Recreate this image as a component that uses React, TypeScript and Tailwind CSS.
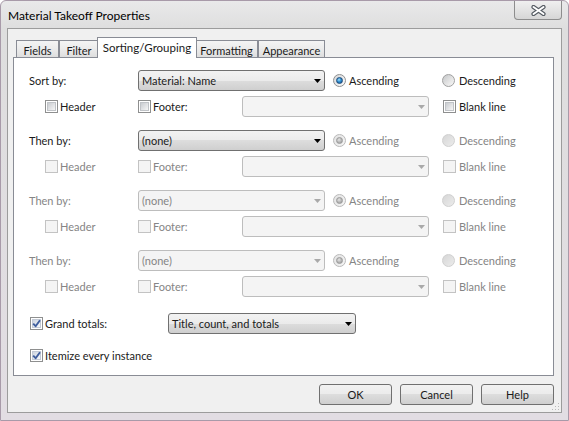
import React from "react";

const btnBg =
  "bg-[linear-gradient(to_bottom,#f2f2f2_0%,#ebebeb_50%,#dddddd_50%,#cfcfcf_100%)]";
const enabledText = "text-[#1a1a1a]";
const disabledText = "text-[#858585]";

function CheckBox({ checked = false, disabled = false }: { checked?: boolean; disabled?: boolean }) {
  if (disabled) {
    return <div className="w-[13px] h-[13px] shrink-0 border border-[#c3c3c3] bg-[#f4f4f4]" />;
  }
  return (
    <div className="relative w-[13px] h-[13px] shrink-0 border border-[#8e8f8f] bg-white p-px">
      <div
        className={
          checked
            ? "w-full h-full border border-[#c3cad6] bg-[linear-gradient(135deg,#cdd4df_0%,#e6eaf0_60%,#f7f8fa_100%)]"
            : "w-full h-full border border-[#c0c3c7] bg-[linear-gradient(135deg,#c9ccd0_0%,#e4e5e7_60%,#f6f6f6_100%)]"
        }
      />
      {checked && (
        <svg className="absolute left-[1px] top-[1px]" width="9" height="9" viewBox="0 0 9 9">
          <path d="M1.2 4.6 L3.6 7.2 L8 1.2" fill="none" stroke="#3f5e9e" strokeWidth="1.9" strokeLinejoin="round" />
        </svg>
      )}
    </div>
  );
}

function Radio({ selected = false, disabled = false }: { selected?: boolean; disabled?: boolean }) {
  if (disabled) {
    return (
      <div
        className={
          selected
            ? "w-[13px] h-[13px] shrink-0 rounded-full border border-[#b9b9b9] bg-[linear-gradient(135deg,#e2e2e2_0%,#f6f6f6_100%)] flex items-center justify-center"
            : "w-[13px] h-[13px] shrink-0 rounded-full border border-[#d0d0d0] bg-[linear-gradient(135deg,#d6d6d6_0%,#ececec_100%)]"
        }
      >
        {selected && (
          <div className="w-[7px] h-[7px] rounded-full border border-[#9a9a9a] bg-[radial-gradient(circle_at_40%_35%,#e4e4e4_0%,#b4b4b4_55%,#969696_100%)]" />
        )}
      </div>
    );
  }
  return (
    <div
      className={
        selected
          ? "w-[13px] h-[13px] shrink-0 rounded-full border border-[#8e8f8f] bg-[linear-gradient(135deg,#d2d4d6_0%,#eeeeee_60%,#fbfbfb_100%)] flex items-center justify-center"
          : "w-[13px] h-[13px] shrink-0 rounded-full border border-[#a0a0a0] bg-[linear-gradient(135deg,#c4c6c8_0%,#e6e6e6_60%,#f8f8f8_100%)]"
      }
    >
      {selected && (
        <div className="w-[7px] h-[7px] rounded-full border border-[#1d4a7a] bg-[radial-gradient(circle_at_40%_35%,#a6e0fb_0%,#2f8fd0_45%,#0d4a8c_100%)]" />
      )}
    </div>
  );
}

function Arrow({ color }: { color: string }) {
  return (
    <svg width="7" height="4" viewBox="0 0 7 4" className="shrink-0">
      <polygon points="0,0 7,0 3.5,4" fill={color} />
    </svg>
  );
}

function Combo({
  text = "",
  disabled = false,
  width,
}: {
  text?: string;
  disabled?: boolean;
  width: string;
}) {
  return (
    <div
      className={
        (disabled
          ? "border-[#bdbdbd] bg-[#f4f4f4] " + disabledText
          : "border-[#707070] " + btnBg + " " + enabledText) +
        " " +
        width +
        " h-[21px] shrink-0 rounded-[3px] border flex items-center justify-between pl-[3px] pr-[3px]"
      }
    >
      <span className="leading-[13px] whitespace-nowrap">{text}</span>
      <Arrow color={disabled ? "#a9a9a9" : "#000000"} />
    </div>
  );
}

type Group = {
  label: string;
  labelDis: boolean;
  combo: string;
  comboDis: boolean;
  radioDis: boolean;
  rowBDis: boolean;
};

const groups: Group[] = [
  { label: "Sort by:", labelDis: false, combo: "Material: Name", comboDis: false, radioDis: false, rowBDis: false },
  { label: "Then by:", labelDis: false, combo: "(none)", comboDis: false, radioDis: true, rowBDis: true },
  { label: "Then by:", labelDis: true, combo: "(none)", comboDis: true, radioDis: true, rowBDis: true },
  { label: "Then by:", labelDis: true, combo: "(none)", comboDis: true, radioDis: true, rowBDis: true },
];

function SortGroup({ g }: { g: Group }) {
  return (
    <div className="flex flex-col gap-[5px]">
      <div className="flex items-center h-[21px]">
        <div className={"w-[109px] shrink-0 leading-[13px] " + (g.labelDis ? disabledText : enabledText)}>{g.label}</div>
        <Combo text={g.combo} disabled={g.comboDis} width="w-[187px]" />
        <div className="w-[8px] shrink-0" />
        <div className="w-[109px] shrink-0 flex items-center gap-[3px]">
          <Radio selected disabled={g.radioDis} />
          <span className={"leading-[13px] " + (g.radioDis ? disabledText : enabledText)}>Ascending</span>
        </div>
        <div className="flex items-center gap-[4px]">
          <Radio disabled={g.radioDis} />
          <span className={"leading-[13px] " + (g.radioDis ? disabledText : enabledText)}>Descending</span>
        </div>
      </div>
      <div className="flex items-center h-[21px] pl-[16px]">
        <div className="w-[93px] shrink-0 flex items-center gap-[2px]">
          <CheckBox disabled={g.rowBDis} />
          <span className={"leading-[13px] " + (g.rowBDis ? disabledText : enabledText)}>Header</span>
        </div>
        <div className="w-[104px] shrink-0 flex items-center gap-[2px]">
          <CheckBox disabled={g.rowBDis} />
          <span className={"leading-[13px] " + (g.rowBDis ? disabledText : enabledText)}>Footer:</span>
        </div>
        <Combo disabled width="w-[187px]" />
        <div className="w-[14px] shrink-0" />
        <div className="flex items-center gap-[3px]">
          <CheckBox disabled={g.rowBDis} />
          <span className={"leading-[13px] " + (g.rowBDis ? disabledText : enabledText)}>Blank line</span>
        </div>
      </div>
    </div>
  );
}

function Tab({ label, w, selected = false }: { label: string; w: string; selected?: boolean }) {
  if (selected) {
    return (
      <div
        className={
          w +
          " relative z-10 -mx-[2px] -mb-px h-[21px] shrink-0 border border-b-0 border-[#898c95] bg-white flex items-start justify-center pt-[3px] text-[11.5px] leading-[14px] " +
          enabledText
        }
      >
        {label}
      </div>
    );
  }
  return (
    <div
      className={
        w +
        " h-[17px] shrink-0 border border-b-0 border-[#898c95] bg-[linear-gradient(to_bottom,#f4f4f4_0%,#ebebeb_50%,#dedede_100%)] flex items-center justify-center pt-[2px] leading-[13px] " +
        enabledText
      }
    >
      {label}
    </div>
  );
}

function Button({ label }: { label: string }) {
  return (
    <div
      className={
        "w-[73px] h-[21px] rounded-[3px] border border-[#707070] flex items-center justify-center leading-[13px] " +
        btnBg +
        " " +
        enabledText
      }
    >
      {label}
    </div>
  );
}

export default function App() {
  return (
    <div className="w-[569px] h-[421px] overflow-hidden bg-white font-[Lato,sans-serif] text-[11px]">
      <div className="w-[569px] h-[421px] flex flex-col rounded-t-[6px] border border-[#a89aa9] bg-[linear-gradient(to_bottom,#e9e9ea_0px,#dedede_28px,#e2dde3_100%)]">
        {/* title bar */}
        <div className="h-[27px] shrink-0 flex items-start justify-between">
          <div className="pl-[7px] pt-[7px] text-[12px] leading-[15px] text-black">Material Takeoff Properties</div>
          <div className="mr-[6px] w-[48px] h-[19px] rounded-b-[4px] border border-t-0 border-[#8d8d8d] bg-[linear-gradient(to_bottom,#f0f0f0_0%,#e3e3e3_50%,#d6d6d6_100%)] flex items-center justify-center">
            <svg width="15" height="11" viewBox="0 0 15 11">
              <path d="M2.5 2 L12.5 9 M12.5 2 L2.5 9" stroke="#555b62" strokeWidth="4.2" strokeLinecap="round" />
              <path d="M2.5 2 L12.5 9 M12.5 2 L2.5 9" stroke="#ffffff" strokeWidth="2" strokeLinecap="round" />
            </svg>
          </div>
        </div>
        {/* client area */}
        <div className="relative mx-[6px] h-[385px] shrink-0 border border-[#9c9c9c] bg-[#f0f0f0] pl-[5px] pt-[8px]">
          {/* tab strip */}
          <div className="flex items-end h-[20px] pl-[3px]">
            <Tab label="Fields" w="w-[43px]" />
            <Tab label="Filter" w="w-[40px]" />
            <Tab label="Sorting/Grouping" w="w-[100px]" selected />
            <Tab label="Formatting" w="w-[63px]" />
            <Tab label="Appearance" w="w-[67px]" />
          </div>
          {/* panel */}
          <div className="w-[541px] h-[319px] border border-[#898c95] bg-white pl-[15px] pt-[12px] flex flex-col">
            <div className="flex flex-col gap-[13px]">
              {groups.map((g, i) => (
                <SortGroup key={i} g={g} />
              ))}
            </div>
            <div className="mt-[16px] ml-px flex items-center h-[21px]">
              <div className="w-[138px] shrink-0 flex items-center gap-[2px]">
                <CheckBox checked />
                <span className={"leading-[13px] " + enabledText}>Grand totals:</span>
              </div>
              <Combo text="Title, count, and totals" width="w-[188px]" />
            </div>
            <div className="mt-[11px] ml-px flex items-center h-[21px] gap-[2px]">
              <CheckBox checked />
              <span className={"leading-[13px] " + enabledText}>Itemize every instance</span>
            </div>
          </div>
          {/* buttons */}
          <div className="mt-[8px] pr-[7px] flex justify-end gap-[8px]">
            <Button label="OK" />
            <Button label="Cancel" />
            <Button label="Help" />
          </div>
          {/* size grip */}
          <svg className="absolute right-[1px] bottom-[1px]" width="8" height="8" viewBox="0 0 8 8">
            <rect x="6" y="0" width="1" height="1" fill="#b8b8b8" />
            <rect x="3" y="3" width="1" height="1" fill="#b8b8b8" />
            <rect x="6" y="3" width="1" height="1" fill="#b8b8b8" />
            <rect x="0" y="6" width="1" height="1" fill="#b8b8b8" />
            <rect x="3" y="6" width="1" height="1" fill="#b8b8b8" />
            <rect x="6" y="6" width="1" height="1" fill="#b8b8b8" />
          </svg>
        </div>
      </div>
    </div>
  );
}
